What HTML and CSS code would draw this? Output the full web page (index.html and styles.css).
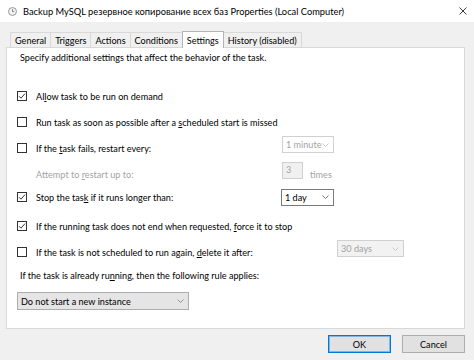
FILE: index.html
```html
<!DOCTYPE html>
<html lang="en">
<head>
    <meta charset="UTF-8">
    <title>Backup MySQL Properties</title>
    <link rel="stylesheet" href="styles.css">
</head>
<body>
    <div class="titlebar">
        <svg class="app-icon" viewBox="0 0 10 10">
            <circle cx="5" cy="5" r="4.4" fill="#f4f4f4" stroke="#8a8a8a" stroke-width="1"/>
            <path d="M5 2.4V5.2H7" fill="none" stroke="#6a6a6a" stroke-width="0.9"/>
        </svg>
        <span class="title">Backup MySQL резервное копирование всех баз Properties (Local Computer)</span>
        <svg class="close" viewBox="0 0 8 8">
            <path d="M0.5 0.5L7.5 7.5M7.5 0.5L0.5 7.5" stroke="#222" stroke-width="0.9"/>
        </svg>
    </div>

    <div class="dialog">
        <div class="tabs">
            <div class="tab">General</div>
            <div class="tab">Triggers</div>
            <div class="tab">Actions</div>
            <div class="tab">Conditions</div>
            <div class="tab active">Settings</div>
            <div class="tab">History (disabled)</div>
        </div>

        <div class="panel">
            <p class="intro">Specify additional settings that affect the behavior of the task.</p>

            <div class="row">
                <span class="check on"><svg viewBox="0 0 8 8"><path d="M1 4.2L3 6.2L7 1.6" fill="none" stroke="#222" stroke-width="0.9"/></svg></span>
                <span>Al<u>l</u>ow task to be run on demand</span>
            </div>

            <div class="row">
                <span class="check"></span>
                <span>Run task as soon as possible after a <u>s</u>cheduled start is missed</span>
            </div>

            <div class="row">
                <div class="main">
                    <span class="check"></span>
                    <span>If the <u>t</u>ask fails, restart every:</span>
                </div>
                <div class="select disabled sel-minute up">
                    <span>1 minute</span>
                    <svg class="chev" viewBox="0 0 7 4"><path d="M0.5 0.5L3.5 3.5L6.5 0.5" fill="none" stroke="#c4c4c4" stroke-width="0.9"/></svg>
                </div>
            </div>

            <div class="row">
                <div class="main indent dim"><span>Attempt to <u>r</u>estart up to:</span></div>
                <div class="num up">3</div>
                <span class="times">times</span>
            </div>

            <div class="row tight">
                <div class="main">
                    <span class="check on"><svg viewBox="0 0 8 8"><path d="M1 4.2L3 6.2L7 1.6" fill="none" stroke="#222" stroke-width="0.9"/></svg></span>
                    <span>Stop the tas<u>k</u> if it runs longer than:</span>
                </div>
                <div class="select sel-day">
                    <span>1 day</span>
                    <svg class="chev" viewBox="0 0 7 4"><path d="M0.5 0.5L3.5 3.5L6.5 0.5" fill="none" stroke="#666" stroke-width="0.9"/></svg>
                </div>
            </div>

            <div class="row loose">
                <span class="check on"><svg viewBox="0 0 8 8"><path d="M1 4.2L3 6.2L7 1.6" fill="none" stroke="#222" stroke-width="0.9"/></svg></span>
                <span>If the running task does not end when requested, <u>f</u>orce it to stop</span>
            </div>

            <div class="row">
                <div class="main main-wide">
                    <span class="check"></span>
                    <span>If the task is not scheduled to run again, <u>d</u>elete it after:</span>
                </div>
                <div class="select disabled sel-days up">
                    <span>30 days</span>
                    <svg class="chev" viewBox="0 0 7 4"><path d="M0.5 0.5L3.5 3.5L6.5 0.5" fill="none" stroke="#c4c4c4" stroke-width="0.9"/></svg>
                </div>
            </div>

            <p class="row tight note">If the task is already ru<u>n</u>ning, then the following rule applies:</p>

            <div class="select sel-instance">
                <span>Do not start a new instance</span>
                <svg class="chev" viewBox="0 0 7 4"><path d="M0.5 0.5L3.5 3.5L6.5 0.5" fill="none" stroke="#888" stroke-width="0.9"/></svg>
            </div>
        </div>

        <div class="buttons">
            <button class="btn default">OK</button>
            <button class="btn">Cancel</button>
        </div>
    </div>
</body>
</html>
```

FILE: styles.css
```css
* {
    margin: 0;
    padding: 0;
    box-sizing: border-box;
}

body {
    width: 474px;
    height: 360px;
    overflow: hidden;
    background: #f0f0f0;
    color: #000;
    font-family: Lato, "Liberation Sans", sans-serif;
    font-size: 9.1px;
    white-space: nowrap;
}

/* Title bar */
.titlebar {
    height: 22px;
    display: flex;
    align-items: center;
    padding-left: 8px;
    background: #fff;
}

.app-icon {
    width: 9px;
    height: 9px;
    margin-right: 6px;
}

.title {
    flex: 1;
    font-size: 9.3px;
}

.close {
    width: 8px;
    height: 8px;
    margin-right: 7px;
}

/* Dialog body */
.dialog {
    padding: 9px 9px 0 6px;
}

.tabs {
    display: flex;
    align-items: flex-end;
    height: 16px;
    padding-left: 5px;
}

.tab {
    height: 15px;
    display: flex;
    align-items: center;
    padding: 0 4px;
    margin-left: -1px;
    border: 1px solid #d9d9d9;
    border-bottom: none;
    background: #f0f0f0;
}

.tab.active {
    position: relative;
    z-index: 1;
    height: 17px;
    margin-bottom: -1px;
    border-color: #b4b4b4;
    background: #fff;
}

.panel {
    height: 282px;
    display: flex;
    flex-direction: column;
    gap: 6px;
    padding: 0 10px;
    background: #fff;
    border: 1px solid #d9d9d9;
}

.intro {
    height: 20px;
    line-height: 20px;
    padding-left: 3px;
    margin-bottom: 12px;
}

/* Setting rows */
.row {
    height: 20px;
    display: flex;
    align-items: center;
}

.row.tight {
    margin-top: -3px;
}

.row.loose {
    margin-top: 3px;
}

.note {
    padding-left: 3px;
}

.main {
    width: 264px;
    display: flex;
    align-items: center;
}

.main-wide {
    width: 320px;
}

.indent {
    padding-left: 19px;
}

.dim {
    color: #a3a3a3;
}

.check {
    width: 10px;
    height: 10px;
    flex-shrink: 0;
    display: flex;
    align-items: center;
    justify-content: center;
    margin-right: 9px;
    border: 1px solid #333;
    background: #fff;
}

.check svg {
    width: 8px;
    height: 8px;
}

/* Dropdowns and inputs */
.select {
    height: 17px;
    display: flex;
    align-items: center;
    justify-content: space-between;
    padding: 0 4px 0 3px;
    border: 1px solid #7a7a7a;
    background: #fff;
}

.select.disabled {
    border-color: #d0d0d0;
    color: #a3a3a3;
}

.chev {
    width: 7px;
    height: 4px;
    flex-shrink: 0;
}

.sel-minute {
    width: 52px;
    margin-left: 1px;
}

.sel-day {
    width: 53px;
}

.sel-days {
    width: 67px;
    background: #f2f2f2;
}

.sel-instance {
    width: 172px;
    height: 18px;
    margin-top: 1px;
    border-color: #adadad;
    background: #e5e5e5;
}

.num {
    width: 21px;
    height: 17px;
    margin-left: 1px;
    padding: 1px 0 0 3px;
    border: 1px solid #d0d0d0;
    background: #f0f0f0;
    color: #a3a3a3;
}

.times {
    margin-left: 7px;
    color: #a3a3a3;
}

.up {
    margin-bottom: 7px;
}

/* Buttons */
.buttons {
    display: flex;
    justify-content: flex-end;
    gap: 11px;
    margin-top: 6px;
}

.btn {
    width: 63px;
    height: 18px;
    border: 1px solid #adadad;
    background: #e1e1e1;
    color: #000;
    font: inherit;
}

.btn.default {
    border-color: #0078d7;
    box-shadow: inset 0 0 0 1px #7fb6e6;
}
```
